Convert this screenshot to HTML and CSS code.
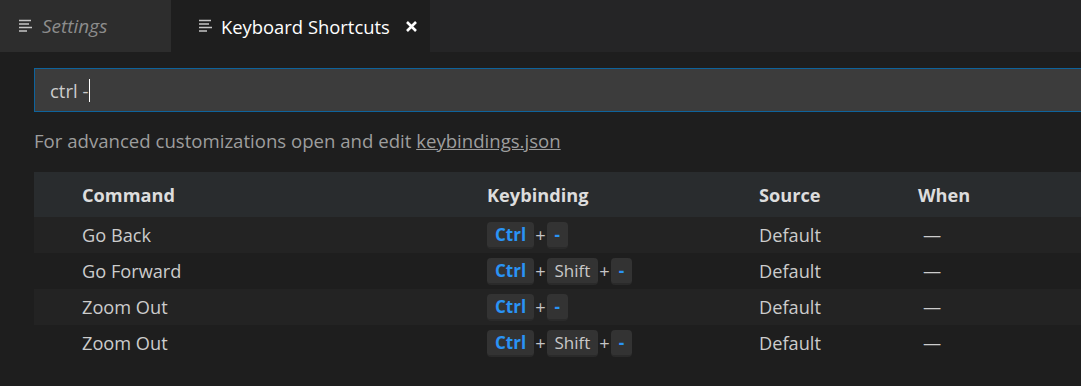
FILE: index.html
```html
<!DOCTYPE html>
<html lang="en">
<head>
    <meta charset="UTF-8">
    <title>Keyboard Shortcuts</title>
    <link rel="stylesheet" href="styles.css">
</head>
<body>
    <!-- Tabs -->
    <div class="tabs">
        <div class="tab">
            <svg class="tab-icon" width="14" height="14" viewBox="0 0 14 14"><path d="M0 1.5h12M0 5h10M0 8.5h13M0 12h8" stroke="currentColor" stroke-width="1.4"/></svg>
            <span class="tab-label italic">Settings</span>
        </div>
        <div class="tab active">
            <svg class="tab-icon" width="14" height="14" viewBox="0 0 14 14"><path d="M0 1.5h12M0 5h10M0 8.5h13M0 12h8" stroke="currentColor" stroke-width="1.4"/></svg>
            <span class="tab-label">Keyboard Shortcuts</span>
            <svg class="close" width="13" height="13" viewBox="0 0 13 13"><path d="M2 2l9 9M11 2l-9 9" stroke="currentColor" stroke-width="2.6"/></svg>
        </div>
    </div>
    <!-- Editor -->
    <div class="editor">
        <div class="search">
            <span>ctrl -</span><span class="caret"></span>
        </div>
        <div class="help">For advanced customizations open and edit <a href="#">keybindings.json</a></div>
        <div class="table">
            <div class="row head">
                <div>Command</div>
                <div>Keybinding</div>
                <div>Source</div>
                <div>When</div>
            </div>
            <div class="row odd">
                <div>Go Back</div>
                <div class="keys"><kbd class="mod">Ctrl</kbd>+<kbd class="mod">-</kbd></div>
                <div>Default</div>
                <div class="when">—</div>
            </div>
            <div class="row">
                <div>Go Forward</div>
                <div class="keys"><kbd class="mod">Ctrl</kbd>+<kbd>Shift</kbd>+<kbd class="mod">-</kbd></div>
                <div>Default</div>
                <div class="when">—</div>
            </div>
            <div class="row odd">
                <div>Zoom Out</div>
                <div class="keys"><kbd class="mod">Ctrl</kbd>+<kbd class="mod">-</kbd></div>
                <div>Default</div>
                <div class="when">—</div>
            </div>
            <div class="row">
                <div>Zoom Out</div>
                <div class="keys"><kbd class="mod">Ctrl</kbd>+<kbd>Shift</kbd>+<kbd class="mod">-</kbd></div>
                <div>Default</div>
                <div class="when">—</div>
            </div>
        </div>
    </div>
</body>
</html>
```

FILE: styles.css
```css
:root {
    --bg: #1e1e1e;
    --tabs-bg: #252526;
    --tab-bg: #2d2d2d;
    --text: #cccccc;
    --accent: #2a93f5;
    --focus: #0e639c;
}
* {
    box-sizing: border-box;
}
body {
    margin: 0;
    background: var(--bg);
    color: var(--text);
    font-family: 'Open Sans', 'Noto Sans', Arial, sans-serif;
    overflow: hidden;
}
.tabs {
    display: flex;
    height: 52px;
    background: var(--tabs-bg);
}
.tab {
    display: flex;
    align-items: center;
    gap: 9px;
    padding: 0 0 0 19px;
    width: 171px;
    background: var(--tab-bg);
    color: #8c8c8c;
}
.tab.active {
    width: 259px;
    background: var(--bg);
    color: #ffffff;
    padding-left: 28px;
    gap: 8px;
}
.tab-icon {
    color: #c5c5c5;
    flex: none;
}
.tab-label {
    font-size: 18.4px;
}
.italic {
    font-style: italic;
    font-size: 19px;
}
.close {
    margin-left: 7px;
    color: #ffffff;
}
.editor {
    padding: 16px 0 0 34px;
}
.search {
    display: flex;
    align-items: center;
    height: 44px;
    border: 1px solid var(--focus);
    border-right: none;
    background: #3c3c3c;
    padding-left: 15px;
    font-size: 18.5px;
    color: #cccccc;
}
.caret {
    width: 1px;
    height: 23px;
    background: #ffffff;
    margin-left: 1px;
}
.help {
    margin: 16px 0 0 0;
    font-size: 18.6px;
    color: #9d9d9d;
    line-height: 26px;
}
.help a {
    color: #9d9d9d;
}
.table {
    margin-top: 18px;
}
.row {
    display: grid;
    grid-template-columns: 48px 405px 272px 159px 1fr;
    height: 36px;
    align-items: center;
    font-size: 18.2px;
}
.row::before {
    content: "";
}
.row.head {
    height: 45px;
    background: #292c2e;
    font-weight: 700;
    color: #dddddd;
}
.row.odd {
    background: #232323;
}
.when {
    padding-left: 5px;
}
.keys {
    display: flex;
    align-items: center;
    gap: 1px;
    color: #c5c5c5;
}
kbd {
    display: inline-block;
    font-family: inherit;
    font-size: 17px;
    line-height: 25px;
    padding: 0 8px;
    background: #333333;
    border-radius: 4px;
    border-bottom: 2px solid #2a2a2a;
    color: #c8c8c8;
}
kbd.mod {
    color: var(--accent);
    font-weight: 700;
}
```
